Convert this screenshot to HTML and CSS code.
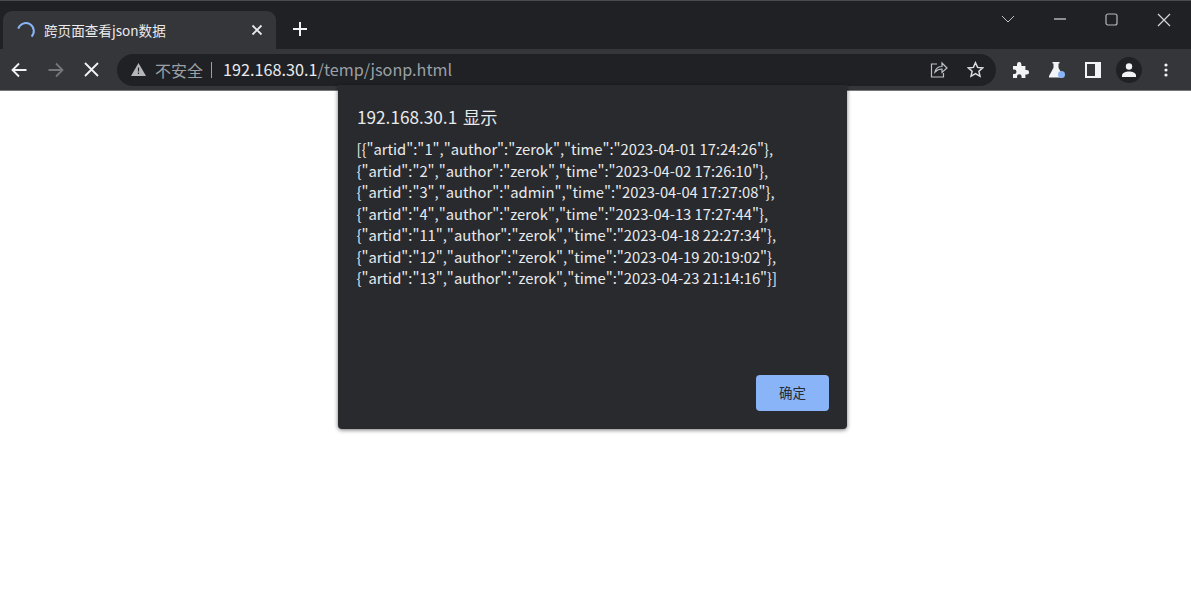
FILE: index.html
```html
<!DOCTYPE html>
<html lang="zh">
<head>
<meta charset="utf-8">
<title>跨页面查看json数据</title>
<link rel="stylesheet" href="styles.css">
</head>
<body>
<header class="browser">
  <div class="tabstrip">
    <div class="tab">
      <svg class="spinner" width="20" height="20" viewBox="0 0 20 20"><path d="M2.200 8.600A8 8 0 1 1 15.600 16.600" fill="none" stroke="#8ab4f8" stroke-width="2"/></svg>
      <span class="tab-title">跨页面查看json数据</span>
      <svg class="tab-close" width="12" height="12" viewBox="0 0 12 12"><path d="M1.500 1.500l9 9M10.500 1.500l-9 9" stroke="#e8eaed" stroke-width="1.800"/></svg>
    </div>
    <svg class="newtab" width="16" height="16" viewBox="0 0 16 16"><path d="M8 1v14M1 8h14" stroke="#f1f3f4" stroke-width="2"/></svg>
    <div class="wincontrols">
      <svg class="win-down" width="14" height="10" viewBox="0 0 14 10"><path d="M1 2l6 6 6-6" fill="none" stroke="#bdc1c6" stroke-width="1"/></svg>
      <svg class="win-min" width="12" height="12" viewBox="0 0 12 12"><path d="M0 6h12" stroke="#d5d7da" stroke-width="1.200"/></svg>
      <svg class="win-max" width="13" height="13" viewBox="0 0 13 13"><rect x="1" y="1" width="11" height="11" rx="2" fill="none" stroke="#b5b7ba" stroke-width="1.200"/></svg>
      <svg class="win-close" width="14" height="14" viewBox="0 0 14 14"><path d="M1 1l12 12M13 1L1 13" stroke="#d5d7da" stroke-width="1.200"/></svg>
    </div>
  </div>
  <div class="toolbar">
    <div class="nav">
      <svg width="16" height="16" viewBox="0 0 16 16"><path d="M15.500 8H1.800M8 1.500L1.500 8 8 14.500" fill="none" stroke="#f1f3f4" stroke-width="1.800"/></svg>
      <svg width="16" height="16" viewBox="0 0 16 16"><path d="M.5 8h13.700M8 1.500L14.500 8 8 14.500" fill="none" stroke="#75777a" stroke-width="1.800"/></svg>
      <svg width="15" height="15" viewBox="0 0 15 15"><path d="M1 1l13 13M14 1L1 14" stroke="#f1f3f4" stroke-width="1.800"/></svg>
    </div>
    <div class="omnibox">
      <svg class="warn" width="15" height="13" viewBox="0 0 15 13"><path d="M7.500 0L15 13H0z" fill="#b4b7ba"/><path d="M7.500 4.500v4M7.500 9.500v1.500" stroke="#202124" stroke-width="1.200"/></svg>
      <span class="insecure">不安全</span>
      <span class="sep"></span>
      <span class="url"><span class="host">192.168.30.1</span>/temp/jsonp.html</span>
      <svg class="omni-share" width="18" height="17" viewBox="0 0 18 17"><path d="M7 3H1.500v13h12v-4M5 11c.8-3.600 3.400-5.500 7-5.500V2l5 5-5 4.500V8c-3 0-5.200 1-7 3z" fill="none" stroke="#bdc1c6" stroke-width="1.200"/></svg>
      <svg class="omni-star" width="17" height="17" viewBox="0 0 17 17"><path d="M8.500 1.700l2.100 4.700 5.100.5-3.800 3.400 1.100 5-4.500-2.600L4 15.300l1.100-5L1.300 6.900l5.100-.5z" fill="none" stroke="#dadce0" stroke-width="1.500"/></svg>
    </div>
    <div class="actions">
      <svg width="18" height="18" viewBox="0 0 18 18"><path d="M1 5h4V3.200a2.200 2.200 0 0 1 4.400 0V5h4v4h1.400a2.300 2.300 0 0 1 0 4.600h-1.400V17H9.600v-1.500a2.300 2.300 0 0 0-4.600 0V17H1v-4h1.300a2.200 2.200 0 0 0 0-4.400H1z" fill="#f1f3f4"/></svg>
      <svg width="18" height="18" viewBox="0 0 18 18"><path d="M4.500 1h7v1.500h-1v4.300L15 15v1.500H1V15l4.500-8.200V2.500h-1z" fill="#f1f3f4"/><circle cx="13.500" cy="13.500" r="3.500" fill="#8ab4f8"/></svg>
      <svg width="16" height="16" viewBox="0 0 16 16"><path d="M0 0h16v16H0z" fill="#f1f3f4"/><path d="M2 2h8v12H2z" fill="#35363a"/></svg>
      <span class="avatar">
        <svg width="16" height="16" viewBox="0 0 16 16"><circle cx="8" cy="4.500" r="3.200" fill="#f1f3f4"/><path d="M1 15v-1.500C1 10.800 5 9.500 8 9.500s7 1.300 7 4V15z" fill="#f1f3f4"/></svg>
      </span>
      <svg width="4" height="14" viewBox="0 0 4 14"><circle cx="2" cy="2" r="1.600" fill="#f1f3f4"/><circle cx="2" cy="7" r="1.600" fill="#f1f3f4"/><circle cx="2" cy="12" r="1.600" fill="#f1f3f4"/></svg>
    </div>
  </div>
</header>
<main class="page"></main>
<div class="dialog" role="alertdialog">
  <h1 class="dialog-title">192.168.30.1 显示</h1>
  <p class="dialog-text">[{"artid":"1","author":"zerok","time":"2023-04-01 17:24:26"},<br>{"artid":"2","author":"zerok","time":"2023-04-02 17:26:10"},<br>{"artid":"3","author":"admin","time":"2023-04-04 17:27:08"},<br>{"artid":"4","author":"zerok","time":"2023-04-13 17:27:44"},<br>{"artid":"11","author":"zerok","time":"2023-04-18 22:27:34"},<br>{"artid":"12","author":"zerok","time":"2023-04-19 20:19:02"},<br>{"artid":"13","author":"zerok","time":"2023-04-23 21:14:16"}]</p>
  <div class="dialog-actions"><button class="ok" type="button">确定</button></div>
</div>
</body>
</html>
```
FILE: styles.css
```css
* { box-sizing: border-box; }
html, body { margin: 0; height: 100%; overflow: hidden; background: #fff; }
body { font-family: "Noto Sans CJK SC", "Liberation Sans", sans-serif; position: relative; }
svg { display: block; flex: none; }

.browser { height: 91px; display: flex; flex-direction: column; }
.tabstrip {
  height: 49px; background: #202124; border-top: 1px solid #4a4b4e;
  display: flex; align-items: flex-end; padding-left: 3px;
}
.tab {
  width: 273px; height: 38px; background: #35363a; border-radius: 9px 9px 0 0;
  display: flex; align-items: center; padding: 0 13px 0 13px;
}
.spinner { margin-right: 8px; }
.tab-title { flex: 1; color: #e8eaed; font-size: 13.600px; line-height: 16px; white-space: nowrap; padding-bottom: 1px; }
.newtab { margin: 0 0 12px 16px; }
.wincontrols {
  margin-left: auto; height: 48px; align-self: flex-start;
  display: flex; align-items: flex-start; padding: 12px 20px 0 0;
}
.win-down { margin: 1px 0 0 0; }
.win-min { margin: 0 0 0 39px; }
.win-max { margin: 0 0 0 39px; }
.win-close { margin: 0 0 0 39px; }

.toolbar {
  height: 42px; background: #35363a; border-bottom: 1px solid #77787a;
  display: flex; align-items: center; padding: 0 0 0 11px;
}
.nav { display: flex; align-items: center; gap: 20.500px; width: 106px; }
.omnibox {
  width: 879px; height: 32px; background: #202124; border-radius: 16px;
  display: flex; align-items: center; padding: 0 12px 0 14px;
}
.warn { margin-right: 9px; }
.insecure { color: #9aa0a6; font-size: 16px; line-height: 20px; }
.sep { width: 1px; height: 16px; background: #9aa0a6; margin: 0 10px 0 8px; }
.url { color: #9aa0a6; font-size: 16.200px; line-height: 20px; flex: 1; white-space: nowrap; padding: 0 0 2px 1px; }
.host { color: #e8eaed; }
.omni-share { margin-right: 19px; }
.actions { display: flex; align-items: center; margin-left: 16px; }
.actions > :nth-child(1) { margin-right: 18px; }
.actions > :nth-child(2) { margin-right: 19px; }
.actions > :nth-child(3) { margin-right: 15px; }
.actions > :nth-child(4) { margin-right: 22px; }
.avatar {
  width: 26px; height: 26px; border-radius: 50%; background: #202124;
  display: flex; align-items: center; justify-content: center;
}

.page { height: calc(100% - 91px); background: #fff; }

.dialog {
  position: absolute; left: 338px; top: 85px; width: 509px; height: 344px;
  background: #292a2d; border-radius: 0 0 4px 4px;
  box-shadow: 0 1px 4px rgba(0, 0, 0, .55);
  padding: 21px 18px 18px 19px;
  display: flex; flex-direction: column; color: #e8eaed;
}
.dialog-title { margin: 0; font-size: 17.200px; word-spacing: 2px; font-weight: 400; line-height: 22px; }
.dialog-text {
  margin: 10px 0 0 -0.500px; font-size: 14.750px; line-height: 21.500px; color: #e8eaed; white-space: nowrap;
}
.dialog-actions { margin-top: auto; display: flex; justify-content: flex-end; }
.ok {
  width: 73px; height: 36px; border: 0; border-radius: 4px; background: #8ab4f8;
  color: #292a2d; font: 13.500px/14px "Noto Sans CJK SC", sans-serif; padding: 0 0 2px;
}
```
